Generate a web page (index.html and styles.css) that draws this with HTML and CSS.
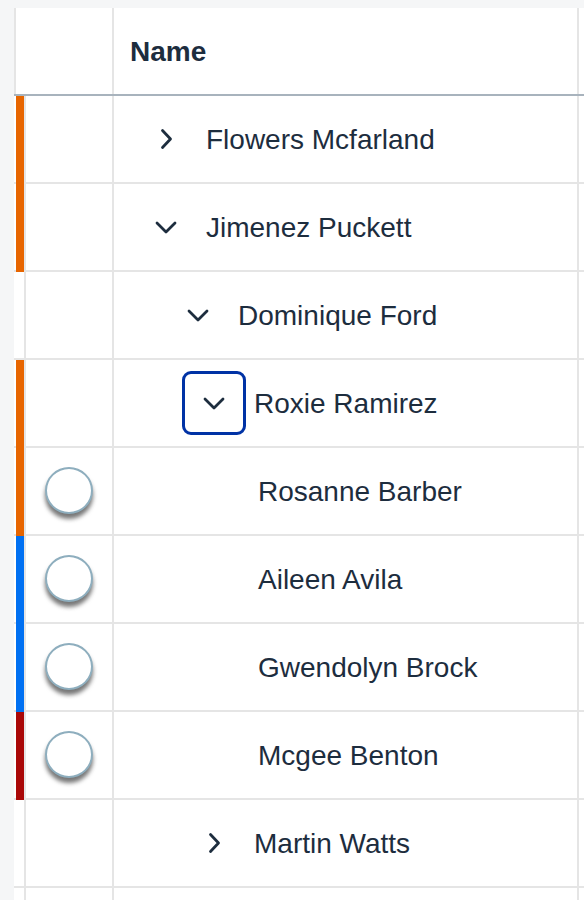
FILE: index.html
```html
<!DOCTYPE html>
<html>
<head>
<meta charset="utf-8">
<link rel="stylesheet" href="styles.css">
</head>
<body>
<div class="table">
  <div class="header">
    <div class="h-sel"></div>
    <div class="h-name">Name</div>
    <div class="h-fill"></div>
  </div>

  <div class="row">
    <div class="hl"><div class="hl-gap"></div><div class="bar orange"></div></div>
    <div class="sel"></div>
    <div class="name lvl1">
      <span class="tog"><svg width="13" height="22" viewBox="0 0 13 22"><path d="M2.5 2.5 L10.5 11 L2.5 19.5"/></svg></span>
      <span class="txt">Flowers Mcfarland</span>
    </div>
    <div class="fill"></div>
  </div>

  <div class="row">
    <div class="hl"><div class="hl-gap"></div><div class="bar orange"></div></div>
    <div class="sel"></div>
    <div class="name lvl1">
      <span class="tog"><svg width="22" height="13" viewBox="0 0 22 13"><path d="M2 2 L11 11 L20 2"/></svg></span>
      <span class="txt">Jimenez Puckett</span>
    </div>
    <div class="fill"></div>
  </div>

  <div class="row">
    <div class="hl"><div class="hl-gap"></div><div class="bar none"></div></div>
    <div class="sel"></div>
    <div class="name lvl2">
      <span class="tog"><svg width="22" height="13" viewBox="0 0 22 13"><path d="M2 2 L11 11 L20 2"/></svg></span>
      <span class="txt">Dominique Ford</span>
    </div>
    <div class="fill"></div>
  </div>

  <div class="row">
    <div class="hl"><div class="hl-gap"></div><div class="bar orange"></div></div>
    <div class="sel"></div>
    <div class="name lvl3">
      <span class="tog focus"><svg width="22" height="13" viewBox="0 0 22 13"><path d="M2 2 L11 11 L20 2"/></svg></span>
      <span class="txt">Roxie Ramirez</span>
    </div>
    <div class="fill"></div>
  </div>

  <div class="row">
    <div class="hl"><div class="hl-gap"></div><div class="bar orange"></div></div>
    <div class="sel"><span class="radio"></span></div>
    <div class="name leaf"><span class="txt">Rosanne Barber</span></div>
    <div class="fill"></div>
  </div>

  <div class="row">
    <div class="hl"><div class="hl-gap"></div><div class="bar blue"></div></div>
    <div class="sel"><span class="radio"></span></div>
    <div class="name leaf"><span class="txt">Aileen Avila</span></div>
    <div class="fill"></div>
  </div>

  <div class="row">
    <div class="hl"><div class="hl-gap"></div><div class="bar blue"></div></div>
    <div class="sel"><span class="radio"></span></div>
    <div class="name leaf"><span class="txt">Gwendolyn Brock</span></div>
    <div class="fill"></div>
  </div>

  <div class="row">
    <div class="hl"><div class="hl-gap"></div><div class="bar red"></div></div>
    <div class="sel"><span class="radio"></span></div>
    <div class="name leaf"><span class="txt">Mcgee Benton</span></div>
    <div class="fill"></div>
  </div>

  <div class="row">
    <div class="hl"><div class="hl-gap"></div><div class="bar none"></div></div>
    <div class="sel"></div>
    <div class="name lvl3">
      <span class="tog"><svg width="13" height="22" viewBox="0 0 13 22"><path d="M2.5 2.5 L10.5 11 L2.5 19.5"/></svg></span>
      <span class="txt">Martin Watts</span>
    </div>
    <div class="fill"></div>
  </div>

  <div class="row last">
    <div class="hl"><div class="hl-gap"></div><div class="bar none"></div></div>
    <div class="sel"></div>
    <div class="name leaf"></div>
    <div class="fill"></div>
  </div>
</div>
</body>
</html>
```

FILE: styles.css
```css
html, body {
  margin: 0;
  padding: 0;
  background: #f5f6f7;
  overflow: hidden;
}

body {
  font-family: "Liberation Sans", Arial, sans-serif;
  color: #1d2d3e;
  font-size: 28px;
  height: 900px;
}

.table {
  margin: 8px 0 0 14px;
  background: #ffffff;
}

.header {
  display: grid;
  grid-template-columns: 100px 465px 1fr;
  height: 88px;
  box-sizing: border-box;
  border-bottom: 2px solid #a8b3bd;
}

.h-sel {
  border-left: 2px solid #e5e5e5;
  border-right: 2px solid #e5e5e5;
}

.h-name {
  border-right: 2px solid #e5e5e5;
  display: flex;
  align-items: center;
  padding-left: 16px;
  padding-top: 1px;
  font-weight: bold;
}

.row {
  display: grid;
  grid-template-columns: 10px 90px 465px 1fr;
  height: 88px;
}

.row.last {
  height: 30px;
}

.hl {
  display: flex;
}

.hl-gap {
  width: 2px;
  box-sizing: border-box;
  border-bottom: 2px solid #e5e5e5;
}

.bar {
  width: 8px;
  box-sizing: border-box;
}

.bar.none { border-bottom: 2px solid #e5e5e5; }
.bar.orange { background: #e76500; }
.bar.blue { background: #0070f2; }
.bar.red { background: #aa0808; }

.sel {
  box-sizing: border-box;
  border-left: 2px solid #e5e5e5;
  border-right: 2px solid #e5e5e5;
  border-bottom: 2px solid #e5e5e5;
  display: flex;
  align-items: center;
  justify-content: center;
}

.radio {
  width: 48px;
  height: 47px;
  box-sizing: border-box;
  border-radius: 50%;
  background: #ffffff;
  border: 2.5px solid #8eaebe;
  box-shadow: 0 5px 4px rgba(30, 30, 30, 0.6);
  margin-bottom: 1px;
}

.name {
  box-sizing: border-box;
  border-right: 2px solid #e5e5e5;
  border-bottom: 2px solid #e5e5e5;
  display: flex;
  align-items: center;
  gap: 8px;
  white-space: nowrap;
  padding-top: 2px;
}

.name.lvl1 { padding-left: 20px; }
.name.lvl2 { padding-left: 52px; }
.name.lvl3 { padding-left: 68px; }
.name.leaf { padding-left: 144px; }

.fill {
  border-bottom: 2px solid #e5e5e5;
  box-sizing: border-box;
}

.tog {
  width: 64px;
  height: 64px;
  box-sizing: border-box;
  border: 3px solid transparent;
  border-radius: 9px;
  display: flex;
  align-items: center;
  justify-content: center;
  flex: none;
  margin-top: -2px;
}

.tog.focus {
  border-color: #0032a5;
}

.tog svg path {
  fill: none;
  stroke: #1d2d3e;
  stroke-width: 2.8;
  stroke-linecap: round;
  stroke-linejoin: round;
}
```
